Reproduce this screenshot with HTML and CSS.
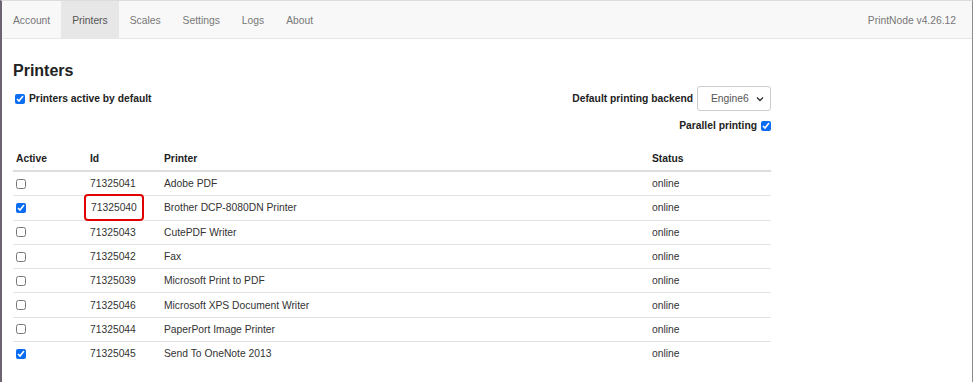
FILE: index.html
```html
<!DOCTYPE html>
<html>
<head>
<meta charset="utf-8">
<link rel="stylesheet" href="styles.css">
</head>
<body>
<div class="frame">
  <nav class="navbar">
    <ul class="nav">
      <li>Account</li>
      <li class="active">Printers</li>
      <li>Scales</li>
      <li>Settings</li>
      <li>Logs</li>
      <li>About</li>
    </ul>
    <div class="version">PrintNode v4.26.12</div>
  </nav>
  <main class="content">
    <div class="inner">
      <h3 class="title">Printers</h3>
      <div class="options">
        <label class="opt"><input type="checkbox" checked> Printers active by default</label>
        <div class="backend">
          <span class="lbl">Default printing backend</span>
          <div class="select"><span>Engine6</span><svg width="8" height="6" viewBox="0 0 8 6"><path d="M1 1.5 L4 4.5 L7 1.5" fill="none" stroke="#333" stroke-width="1.4"/></svg></div>
        </div>
      </div>
      <div class="parallel"><label class="opt">Parallel printing <input type="checkbox" checked></label></div>
      <table class="tbl">
        <thead>
          <tr><th class="c1">Active</th><th class="c2">Id</th><th class="c3">Printer</th><th class="c4">Status</th></tr>
        </thead>
        <tbody>
          <tr><td><input type="checkbox"></td><td>71325041</td><td>Adobe PDF</td><td>online</td></tr>
          <tr><td><input type="checkbox" checked></td><td><span class="hl">71325040</span></td><td>Brother DCP-8080DN Printer</td><td>online</td></tr>
          <tr><td><input type="checkbox"></td><td>71325043</td><td>CutePDF Writer</td><td>online</td></tr>
          <tr><td><input type="checkbox"></td><td>71325042</td><td>Fax</td><td>online</td></tr>
          <tr><td><input type="checkbox"></td><td>71325039</td><td>Microsoft Print to PDF</td><td>online</td></tr>
          <tr><td><input type="checkbox"></td><td>71325046</td><td>Microsoft XPS Document Writer</td><td>online</td></tr>
          <tr><td><input type="checkbox"></td><td>71325044</td><td>PaperPort Image Printer</td><td>online</td></tr>
          <tr><td><input type="checkbox" checked></td><td>71325045</td><td>Send To OneNote 2013</td><td>online</td></tr>
        </tbody>
      </table>
    </div>
  </main>
</div>
</body>
</html>
```
FILE: styles.css
```css
html, body {
  margin: 0;
  padding: 0;
  background: #fff;
}
body {
  font-family: "Liberation Sans", Arial, sans-serif;
  font-size: 10.3px;
  color: #333;
}
.frame {
  width: 970px;
  height: 381px;
  border-top: 1px solid #dcdcdc;
  border-left: 2px solid #6b6370;
  border-right: 1px solid #8c8c8c;
  overflow: hidden;
}
.navbar {
  display: flex;
  justify-content: space-between;
  align-items: stretch;
  height: 37px;
  background: #f8f8f8;
  border-bottom: 1px solid #e7e7e7;
}
.nav {
  display: flex;
  margin: 0;
  padding: 0;
  list-style: none;
}
.nav li {
  display: flex;
  align-items: center;
  padding: 1px 11px 0;
  color: #777;
  font-size: 10.3px;
}
.nav li.active {
  background: #e7e7e7;
  color: #555;
}
.version {
  display: flex;
  align-items: center;
  padding: 1px 16px 0 0;
  color: #777;
}
.content {
  padding: 0 11px;
}
.inner {
  width: 758px;
}
.title {
  margin: 22px 0 0;
  font-size: 16px;
  line-height: 20px;
  font-weight: bold;
  color: #222;
}
.options {
  display: flex;
  justify-content: space-between;
  align-items: center;
  margin-top: 5px;
  height: 25px;
}
.opt {
  display: flex;
  align-items: center;
  gap: 3px;
  font-weight: bold;
  color: #222;
}
input[type="checkbox"] {
  width: 10px;
  height: 10px;
  margin: 0;
  accent-color: #0a6cf0;
}
.opt input {
  margin: 0 1px 0 2px;
}
.backend {
  display: flex;
  align-items: center;
  gap: 4px;
}
.lbl {
  font-weight: bold;
  color: #222;
}
.select {
  display: flex;
  align-items: center;
  justify-content: space-between;
  box-sizing: border-box;
  width: 74px;
  height: 25px;
  border: 1px solid #ccc;
  border-radius: 3px;
  padding: 0 6px 0 13px;
  color: #555;
  background: #fff;
}
.parallel {
  display: flex;
  justify-content: flex-end;
  margin-top: 7px;
  height: 15px;
  align-items: center;
}
.parallel .opt input {
  margin: 0 0 0 1px;
}
.tbl {
  width: 758px;
  margin-top: 13px;
  border-collapse: collapse;
}
.tbl th {
  text-align: left;
  font-weight: bold;
  color: #222;
  padding: 6px 3px;
  height: 12px;
  border-bottom: 2px solid #ddd;
}
.tbl td {
  padding: 0 3px;
  height: 23.3px;
  border-top: 1px solid #e2e2e2;
  vertical-align: middle;
}
.tbl tbody tr:first-child td {
  border-top: none;
}
.tbl td:first-child input {
  display: block;
  margin-left: 0;
}
.c1 { width: 68px; }
.c2 { width: 68px; }
.c3 { width: 482px; }
.hl {
  display: inline-block;
  margin: -7px -6px;
  padding: 6px 5px;
  border: 2px solid #e00000;
  border-radius: 4px;
}
```
